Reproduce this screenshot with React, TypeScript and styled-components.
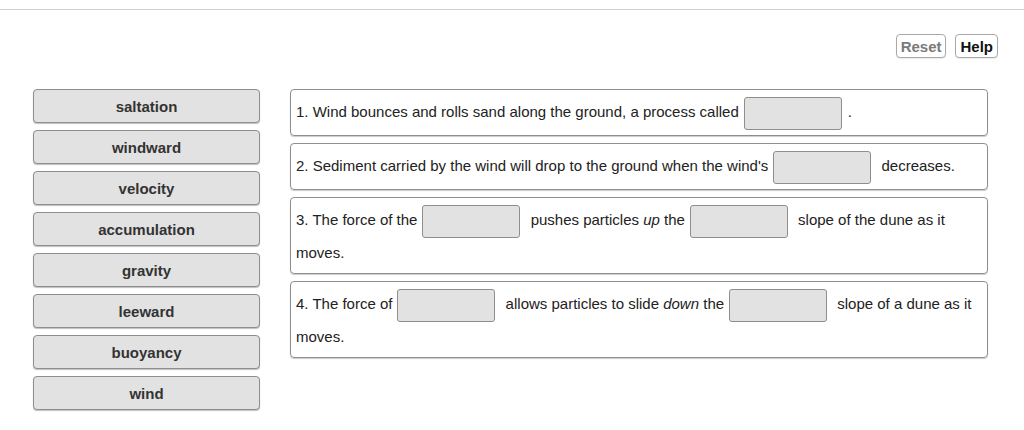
import React from "react";
import styled, { createGlobalStyle } from "styled-components";

const Global = createGlobalStyle`
  html, body { margin: 0; padding: 0; background: #fff; }
  body { font-family: "Liberation Sans", Arial, Helvetica, sans-serif; color: #333; }
`;

const Frame = styled.div`
  margin-top: 9px;
  border-top: 1px solid #cfcfcf;
  height: 420px;
  box-sizing: border-box;
`;

const Toolbar = styled.div`
  display: flex;
  justify-content: flex-end;
  gap: 9px;
  padding: 24px 26px 0 0;
`;

const ToolButton = styled.button<{ $muted?: boolean }>`
  height: 24px;
  padding: 0 4px;
  border: 1px solid #a9a9a9;
  border-radius: 4px;
  background: #fff;
  font-family: "Liberation Sans", Arial, sans-serif;
  font-weight: bold;
  font-size: 15px;
  color: ${(p) => (p.$muted ? "#7a7a7a" : "#111")};
  box-shadow: 0 1px 1px rgba(0, 0, 0, 0.08);
`;

const Main = styled.div`
  display: flex;
  align-items: flex-start;
  gap: 30px;
  padding: 31px 0 0 33px;
`;

const WordBank = styled.div`
  display: flex;
  flex-direction: column;
  gap: 7px;
  width: 227px;
`;

const Word = styled.div`
  height: 34px;
  box-sizing: border-box;
  display: flex;
  align-items: center;
  justify-content: center;
  background: #e2e2e2;
  border: 1px solid #8e8e8e;
  border-radius: 4px;
  box-shadow: 0 1px 1px rgba(0, 0, 0, 0.25);
  font-weight: bold;
  font-size: 15px;
  color: #333;
`;

const Questions = styled.div`
  display: flex;
  flex-direction: column;
  gap: 7px;
  width: 698px;
`;

const Question = styled.div`
  box-sizing: border-box;
  border: 1px solid #8e8e8e;
  border-radius: 4px;
  box-shadow: 0 1px 1px rgba(0, 0, 0, 0.2);
  padding: 7px 6px 5px 5px;
  font-size: 15px;
  line-height: 30px;
  color: #222;
`;

const Drop = styled.span`
  display: inline-block;
  vertical-align: middle;
  width: 98px;
  height: 33px;
  box-sizing: border-box;
  margin: 0 6px 0 5px;
  background: #e2e2e2;
  border: 1px solid #8e8e8e;
  border-radius: 3px;
`;

const words = [
  "saltation",
  "windward",
  "velocity",
  "accumulation",
  "gravity",
  "leeward",
  "buoyancy",
  "wind",
];

export default function App() {
  return (
    <>
      <Global />
      <Frame>
        <Toolbar>
          <ToolButton $muted>Reset</ToolButton>
          <ToolButton>Help</ToolButton>
        </Toolbar>
        <Main>
          <WordBank>
            {words.map((w) => (
              <Word key={w}>{w}</Word>
            ))}
          </WordBank>
          <Questions>
            <Question>
              1. Wind bounces and rolls sand along the ground, a process called
              <Drop />.
            </Question>
            <Question>
              2. Sediment carried by the wind will drop to the ground when the wind's
              <Drop /> decreases.
            </Question>
            <Question>
              3. The force of the<Drop /> pushes particles <i>up</i> the<Drop /> slope
              of the dune as it moves.
            </Question>
            <Question>
              4. The force of<Drop /> allows particles to slide <i>down</i> the<Drop />{" "}
              slope of a dune as it moves.
            </Question>
          </Questions>
        </Main>
      </Frame>
    </>
  );
}
